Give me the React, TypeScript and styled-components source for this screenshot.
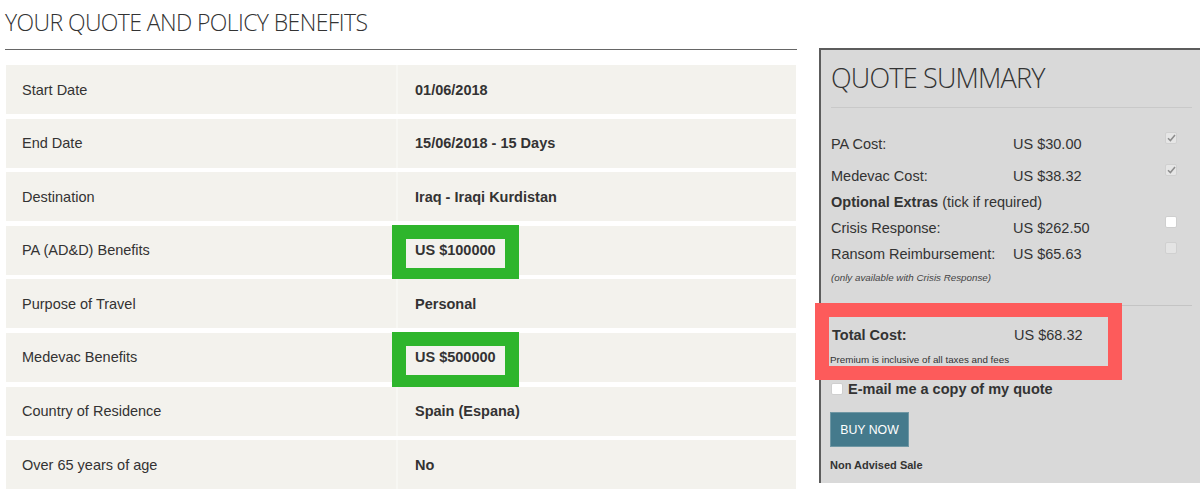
import React from "react";
import styled, { createGlobalStyle, css } from "styled-components";

const Global = createGlobalStyle`
  html, body { margin: 0; padding: 0; background: #fff; overflow: hidden; }
  body { font-family: "Liberation Sans", Arial, Helvetica, sans-serif; color: #333; }
  * { box-sizing: border-box; }
`;

const Page = styled.div`
  display: flex;
  align-items: flex-start;
  width: 1200px;
  height: 500px;
  overflow: hidden;
`;

const Main = styled.section`
  width: 792px;
  margin-left: 5px;
  flex-shrink: 0;
`;

const Title = styled.h1`
  margin: 0;
  height: 50px;
  padding-top: 6px;
  font-family: "Open Sans", "Liberation Sans", sans-serif;
  font-weight: 300;
  font-size: 23px;
  letter-spacing: -0.6px;
  line-height: 32px;
  color: #333;
  border-bottom: 1.5px solid #666;
`;

const Rows = styled.div`
  display: flex;
  flex-direction: column;
  gap: 4.6px;
  margin: 15px 0 0 1px;
  width: 790px;
`;

const Row = styled.div`
  display: grid;
  grid-template-columns: 390px 1fr;
  grid-template-rows: 49px;
  height: 49px;
  background: #f3f2ed;
  font-size: 14.5px;
`;

const Cell = styled.div<{ $value?: boolean }>`
  display: flex;
  align-items: center;
  padding-left: ${(p) => (p.$value ? "17px" : "16px")};
  font-weight: ${(p) => (p.$value ? "bold" : "normal")};
  color: #333;
  ${(p) => p.$value && css`border-left: 2px solid #f7f7f3;`}
`;

const GreenMark = styled.span`
  display: inline-block;
  border: 14px solid #2eb52c;
  padding: 0 9px 6px 9px;
  margin-left: -23px;
  margin-top: 6px;
  line-height: 23px;
  background: #f3f2ed;
`;

const Panel = styled.aside`
  flex-shrink: 0;
  width: 381px;
  height: 435px;
  margin: 48px 0 0 22px;
  background: #d9d9d9;
  border-top: 2px solid #5c5c5c;
  border-left: 2px solid #5c5c5c;
  padding: 0 8px 0 10px;
  display: flex;
  flex-direction: column;
`;

const PanelTitle = styled.h2`
  margin: 0;
  padding-top: 10px;
  padding-bottom: 11px;
  font-family: "Open Sans", "Liberation Sans", sans-serif;
  font-weight: 300;
  font-size: 27px;
  letter-spacing: -0.8px;
  line-height: 36px;
  color: #333;
  border-bottom: 1px solid #c9c9c9;
`;

const CostGrid = styled.div`
  display: grid;
  grid-template-columns: 182px 152px 13px;
  margin-top: 23px;
  font-size: 14.5px;
  color: #333;
`;

const CostRow = styled.div<{ $gap?: number; $h?: number }>`
  display: contents;
  & > * {
    height: ${(p) => p.$h ?? 26}px;
    margin-bottom: ${(p) => p.$gap ?? 0}px;
    display: flex;
    align-items: center;
  }
`;

const Extras = styled.div`
  grid-column: 1 / -1;
  height: 26px;
  display: flex;
  align-items: center;
  font-size: 14.5px;
  b { font-weight: bold; margin-right: 4px; }
`;

const Box = styled.span<{ $state: "checked" | "open" | "disabled" }>`
  width: 12px;
  height: 12px;
  border-radius: 2px;
  display: flex;
  align-items: center;
  justify-content: center;
  border: 1px solid ${(p) => (p.$state === "open" ? "#cfcfcf" : "#d0d0d0")};
  background: ${(p) => (p.$state === "open" ? "#fff" : p.$state === "disabled" ? "#e4e4e4" : "#e6e6e6")};
  svg { display: block; }
`;

const BoxCell = styled.div`
  display: flex;
  align-items: center;
  justify-content: flex-start;
  margin-top: -6px;
`;

const Note = styled.div`
  margin-top: 4px;
  font-size: 9.8px;
  font-style: italic;
  line-height: 14px;
  color: #444;
`;

const Divider = styled.div`
  margin-top: 20px;
  height: 1px;
  background: #c4c4c4;
`;

const TotalBlock = styled.div`
  position: relative;
  padding-top: 19px;
`;

const RedFrame = styled.span`
  position: absolute;
  top: -3px;
  left: -16px;
  width: 307px;
  height: 77px;
  border: 14px solid #fd5b5b;
  pointer-events: none;
`;

const TotalRow = styled.div`
  display: grid;
  grid-template-columns: 182px 1fr;
  height: 20px;
  align-items: center;
  font-size: 14.5px;
  padding-left: 1px;
  b { font-weight: bold; }
`;

const Premium = styled.div`
  margin-top: 9px;
  height: 12px;
  font-size: 9.8px;
  line-height: 12px;
  color: #333;
  margin-left: -1px;
`;

const EmailRow = styled.label`
  display: flex;
  align-items: center;
  gap: 5px;
  margin-top: 13px;
  height: 20px;
  font-size: 14.5px;
  font-weight: bold;
  color: #333;
`;

const BuyButton = styled.button`
  margin-top: 13px;
  width: 79px;
  height: 35px;
  background: #457a8c;
  border: 1px solid #6f97a4;
  color: #fff;
  font-family: "Liberation Sans", Arial, sans-serif;
  font-size: 12.3px;
  padding: 0;
  cursor: pointer;
  align-self: flex-start;
  margin-left: -1px;
`;

const Footnote = styled.div`
  margin-top: 11px;
  font-size: 11px;
  font-weight: bold;
  color: #333;
  line-height: 14px;
  margin-left: -1px;
`;

const Check = () => (
  <svg width="9" height="8" viewBox="0 0 9 8">
    <path d="M1 4.3 L3.4 6.6 L8 1" fill="none" stroke="#8d8d8d" strokeWidth="1.5" />
  </svg>
);

const rows: { label: string; value: string; mark?: boolean }[] = [
  { label: "Start Date", value: "01/06/2018" },
  { label: "End Date", value: "15/06/2018 - 15 Days" },
  { label: "Destination", value: "Iraq - Iraqi Kurdistan" },
  { label: "PA (AD&D) Benefits", value: "US $100000", mark: true },
  { label: "Purpose of Travel", value: "Personal" },
  { label: "Medevac Benefits", value: "US $500000", mark: true },
  { label: "Country of Residence", value: "Spain (Espana)" },
  { label: "Over 65 years of age", value: "No" },
];

export default function App() {
  return (
    <>
      <Global />
      <Page>
        <Main>
          <Title>YOUR QUOTE AND POLICY BENEFITS</Title>
          <Rows>
            {rows.map((r) => (
              <Row key={r.label}>
                <Cell>{r.label}</Cell>
                <Cell $value>{r.mark ? <GreenMark>{r.value}</GreenMark> : r.value}</Cell>
              </Row>
            ))}
          </Rows>
        </Main>
        <Panel>
          <PanelTitle>QUOTE SUMMARY</PanelTitle>
          <CostGrid>
            <CostRow $gap={6}>
              <span>PA Cost:</span>
              <span>US $30.00</span>
              <BoxCell>
                <Box $state="checked"><Check /></Box>
              </BoxCell>
            </CostRow>
            <CostRow>
              <span>Medevac Cost:</span>
              <span>US $38.32</span>
              <BoxCell>
                <Box $state="checked"><Check /></Box>
              </BoxCell>
            </CostRow>
            <Extras>
              <b>Optional Extras</b> (tick if required)
            </Extras>
            <CostRow>
              <span>Crisis Response:</span>
              <span>US $262.50</span>
              <BoxCell>
                <Box $state="open" />
              </BoxCell>
            </CostRow>
            <CostRow>
              <span>Ransom Reimbursement:</span>
              <span>US $65.63</span>
              <BoxCell>
                <Box $state="disabled" />
              </BoxCell>
            </CostRow>
          </CostGrid>
          <Note>(only available with Crisis Response)</Note>
          <Divider />
          <TotalBlock>
            <RedFrame />
            <TotalRow>
              <b>Total Cost:</b>
              <span>US $68.32</span>
            </TotalRow>
            <Premium>Premium is inclusive of all taxes and fees</Premium>
          </TotalBlock>
          <EmailRow>
            <Box $state="open" />
            E-mail me a copy of my quote
          </EmailRow>
          <BuyButton>BUY NOW</BuyButton>
          <Footnote>Non Advised Sale</Footnote>
        </Panel>
      </Page>
    </>
  );
}
